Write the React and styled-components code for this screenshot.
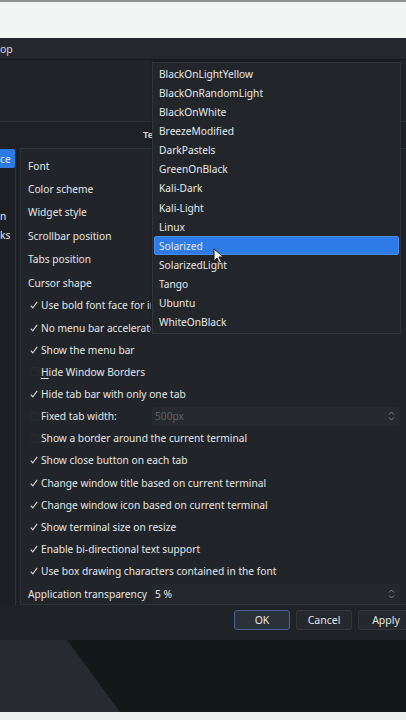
import React from "react";
import styled, { createGlobalStyle } from "styled-components";

const Global = createGlobalStyle`
  html, body { margin: 0; padding: 0; background: #1f2327; }
  body {
    width: 406px;
    height: 720px;
    overflow: hidden;
    font-family: "Noto Sans", "Open Sans", "DejaVu Sans", sans-serif;
    -webkit-font-smoothing: antialiased;
  }
  * { box-sizing: border-box; }
`;

const schemes = [
  "BlackOnLightYellow",
  "BlackOnRandomLight",
  "BlackOnWhite",
  "BreezeModified",
  "DarkPastels",
  "GreenOnBlack",
  "Kali-Dark",
  "Kali-Light",
  "Linux",
  "Solarized",
  "SolarizedLight",
  "Tango",
  "Ubuntu",
  "WhiteOnBlack",
];

const combos = ["Font", "Color scheme", "Widget style", "Scrollbar position", "Tabs position", "Cursor shape"];

// rows that sit under the open popup are clipped at its left edge
const checks = [
  { text: "Use bold font face for intense colors", on: true, clip: true },
  { text: "No menu bar accelerator", on: true, clip: true },
  { text: "Show the menu bar", on: true },
  { text: "Hide Window Borders", on: false, mnemonic: true },
  { text: "Hide tab bar with only one tab", on: true },
  { text: "Fixed tab width:", on: false, spin: "500px" },
  { text: "Show a border around the current terminal", on: false },
  { text: "Show close button on each tab", on: true },
  { text: "Change window title based on current terminal", on: true },
  { text: "Change window icon based on current terminal", on: true },
  { text: "Show terminal size on resize", on: true },
  { text: "Enable bi-directional text support", on: true },
  { text: "Use box drawing characters contained in the font", on: true },
];

const SpinArrows = () => (
  <svg width="7" height="12" viewBox="0 0 7 12">
    <path d="M1 4.5 L3.5 2 L6 4.5" fill="none" stroke="#7d8287" strokeWidth="1" />
    <path d="M1 7.5 L3.5 10 L6 7.5" fill="none" stroke="#7d8287" strokeWidth="1" />
  </svg>
);

const Tick = () => (
  <svg width="8" height="8" viewBox="0 0 8 8">
    <path d="M0.8 4.6 L2.8 6.8 L7.2 0.8" fill="none" stroke="#d2d4d6" strokeWidth="1.1" />
  </svg>
);

const App = () => {
  return (
    <Page>
      <Global />
      <TopStrip />
      <Dialog>
        <TitleBar>op</TitleBar>
        <HeaderArea />
        <TabRow>
          <TabLabel>Terminal</TabLabel>
        </TabRow>
        <Body>
          <Sidebar>
            <SideItem selected>ce</SideItem>
            <SideItem />
            <SideItem />
            <SideItem>n</SideItem>
            <SideItem>ks</SideItem>
          </Sidebar>
          <Frame>
            {combos.map((label) => (
              <ComboRow key={label}>
                <Label>{label}</Label>
                <Combo />
              </ComboRow>
            ))}
            {checks.map((c) => (
              <CheckRow key={c.text}>
                <CheckLeft>
                  <Check on={c.on}>{c.on && <Tick />}</Check>
                  <CheckText clip={c.clip}>
                    {c.mnemonic ? (
                      <>
                        <u>H</u>
                        {c.text.slice(1)}
                      </>
                    ) : (
                      c.text
                    )}
                  </CheckText>
                </CheckLeft>
                {c.spin && (
                  <Spin disabled>
                    <span>{c.spin}</span>
                    <SpinArrows />
                  </Spin>
                )}
              </CheckRow>
            ))}
            <ComboRow>
              <Label>Application transparency</Label>
              <Spin>
                <span>5 %</span>
                <SpinArrows />
              </Spin>
            </ComboRow>
          </Frame>
        </Body>
        <Footer>
          <Button primary>OK</Button>
          <Button>Cancel</Button>
          <Button>Apply</Button>
        </Footer>
      </Dialog>
      <Desktop>
        <svg width="100%" height="100%" viewBox="0 0 406 72" preserveAspectRatio="none">
          <rect width="406" height="72" fill="#13181b" />
          <polygon points="0,0 67,0 120,72 0,72" fill="#272b31" />
        </svg>
      </Desktop>
      <BottomStrip />

      <Popup>
        {schemes.map((s) => (
          <PopupItem key={s} selected={s === "Solarized"}>
            {s}
          </PopupItem>
        ))}
      </Popup>
      <Cursor>
        <svg width="12" height="16" viewBox="0 0 12 16">
          <path
            d="M1 1 L1 13 L4 10 L6.5 15 L8.5 14 L6 9 L10.5 9 Z"
            fill="#f2f2f2"
            stroke="#1a1a1a"
            strokeWidth="1"
            strokeLinejoin="round"
          />
        </svg>
      </Cursor>
    </Page>
  );
};

const Page = styled.div`
  position: relative;
  width: 406px;
  height: 720px;
  overflow: hidden;
  display: flex;
  flex-direction: column;
`;

const TopStrip = styled.div`
  height: 38px;
  flex: none;
  background: #f3f4f4;
  border-top: 2px solid #8f9192;
`;

const Dialog = styled.div`
  height: 602px;
  flex: none;
  display: flex;
  flex-direction: column;
  background: #1e2226;
`;

const TitleBar = styled.div`
  height: 22px;
  display: flex;
  align-items: center;
  background: #25292d;
  color: #d4d6d8;
  font-size: 10.5px;
  border-bottom: 1px solid #1a1d20;
`;

const HeaderArea = styled.div`
  height: 62px;
  background: #212529;
  border-bottom: 1px solid #2f3439;
`;

const TabRow = styled.div`
  height: 24px;
  display: flex;
  align-items: center;
  padding-left: 143px;
`;

const TabLabel = styled.span`
  max-width: 9px;
  overflow: hidden;
  white-space: nowrap;
  font-size: 9.5px;
  font-weight: 600;
  color: #d8dadc;
`;

const Body = styled.div`
  height: 459px;
  display: flex;
  padding-top: 2px;
`;

const Sidebar = styled.div`
  width: 16px;
  flex: none;
  display: flex;
  flex-direction: column;
  border-right: 1px solid #2e3337;
  padding-top: 1px;
  background: #1c2024;
`;

const SideItem = styled.div`
  height: 19px;
  display: flex;
  align-items: center;
  font-size: 10.2px;
  color: #e4e6e8;
  background: ${(p) => (p.selected ? "#2c7be5" : "transparent")};
  border-radius: ${(p) => (p.selected ? "0 2px 2px 0" : "0")};
`;

const Frame = styled.div`
  flex: 1;
  margin-left: 4px;
  margin-right: -20px;
  border: 1px solid #2d3236;
  background: #212529;
  padding: 5px 0 0 7px;
  display: flex;
  flex-direction: column;
`;

const ComboRow = styled.div`
  height: 23.4px;
  display: flex;
  align-items: center;
  flex: none;
`;

const Label = styled.div`
  width: 124px;
  flex: none;
  font-size: 10.2px;
  color: #e4e6e8;
  white-space: nowrap;
`;

const Combo = styled.div`
  width: 248px;
  height: 19px;
  background: #2a2e33;
  border: 1px solid #363b40;
  border-radius: 3px;
`;

const CheckRow = styled.div`
  height: 22.15px;
  display: flex;
  align-items: center;
  flex: none;
`;

const CheckLeft = styled.div`
  width: 124px;
  flex: none;
  display: flex;
  align-items: center;
  padding-left: 2px;
`;

const Check = styled.span`
  width: 9px;
  height: 9px;
  flex: none;
  display: flex;
  align-items: center;
  justify-content: flex-start;
  margin-right: 2px;
  border: ${(p) => (p.on ? "none" : "1px solid #272b2f")};
  border-radius: 2px;
  svg { display: block; }
`;

const CheckText = styled.span`
  font-size: 10.2px;
  color: #e4e6e8;
  white-space: nowrap;
  ${(p) => (p.clip ? "max-width: 110px; overflow: hidden;" : "")}
  u {
    text-decoration-thickness: 1px;
    text-underline-offset: 2px;
  }
`;

const Spin = styled.div`
  width: 248px;
  height: 19px;
  display: flex;
  align-items: center;
  justify-content: space-between;
  padding: 0 5px 0 3px;
  font-size: 10.2px;
  color: ${(p) => (p.disabled ? "#5c6166" : "#e4e6e8")};
  background: ${(p) => (p.disabled ? "#262a2f" : "#24282d")};
  border-radius: 2px;
`;

const Footer = styled.div`
  height: 35px;
  display: flex;
  justify-content: flex-end;
  align-items: flex-start;
  gap: 6px;
  padding-top: 5px;
  margin-right: -8px;
`;

const Button = styled.div`
  width: 56px;
  height: 20px;
  display: flex;
  align-items: center;
  justify-content: center;
  font-size: 10.5px;
  color: #e4e6e8;
  background: ${(p) => (p.primary ? "#2a313b" : "#24282c")};
  border: 1px solid ${(p) => (p.primary ? "#46658a" : "#31363b")};
  border-radius: 3px;
`;

const Desktop = styled.div`
  height: 72px;
  flex: none;
  svg { display: block; }
`;

const BottomStrip = styled.div`
  flex: 1;
  background: #eef0ef;
`;

const Popup = styled.div`
  position: absolute;
  left: 152px;
  top: 62px;
  width: 249px;
  height: 272px;
  padding: 1px;
  background: #22262a;
  border: 1px solid #30353a;
  box-shadow: 0 -2px 3px rgba(0, 0, 0, 0.35);
  display: flex;
  flex-direction: column;
`;

const PopupItem = styled.div`
  height: 19.15px;
  flex: none;
  display: flex;
  align-items: center;
  padding-left: 4px;
  font-size: 10.2px;
  color: #e6e8ea;
  background: ${(p) => (p.selected ? "#2d7be6" : "transparent")};
  border: 1px solid ${(p) => (p.selected ? "#4a8ef0" : "transparent")};
  border-radius: 2px;
`;

const Cursor = styled.div`
  position: absolute;
  left: 213px;
  top: 248px;
  svg { display: block; }
`;

export default App;
